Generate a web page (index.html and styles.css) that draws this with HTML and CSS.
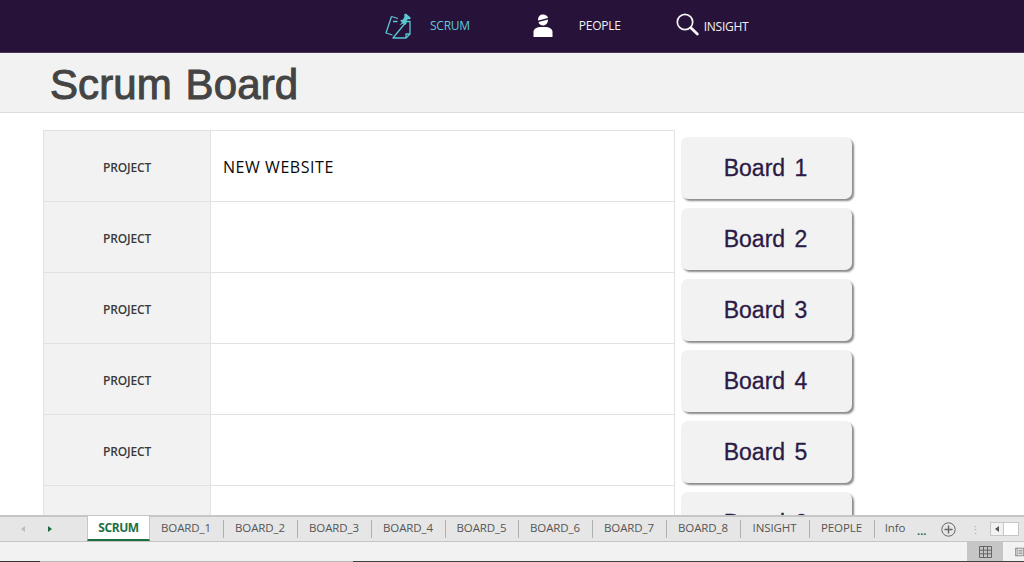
FILE: index.html
```html
<!DOCTYPE html>
<html lang="en">
<head>
<meta charset="utf-8">
<title>Scrum Board</title>
<link rel="stylesheet" href="styles.css">
</head>
<body>
<div class="page">
  <header class="topbar">
    <div class="nav nav-scrum">
      <svg class="ico-scrum" width="27" height="26" viewBox="0 0 27 26" fill="none" stroke="#5cc6d3" stroke-width="1.3" stroke-linejoin="round">
        <path d="M6.500 3.500 L13 5.500 M6.500 3.500 L1 20 L7.500 22"/>
        <path d="M8 8.500 L12.500 8.500 M21.500 8.500 L25 8.500 V21 L21 25 H8 Z"/>
        <path d="M21 25 V21 L25 21"/>
        <path d="M14 12.500 L17 9.500 L15 7.500 L18 6.500 L19.500 3.500 L19 1.500 L21 0.500 L26 5 L24.500 6.500 L23 6 L21 8.500 L21.500 10.500 L20 12 L18 10.500 Z" fill="#5cc6d3" stroke="none"/>
      </svg>
      <span class="nav-label label-scrum">SCRUM</span>
    </div>
    <div class="nav nav-people">
      <svg class="ico-people" width="20" height="23" viewBox="0 0 20 23" fill="#fff">
        <path d="M5 6 C5 2.500 7 0.500 10 0.500 C13 0.500 15 2.500 15 4 L5.500 6.500 Z"/>
        <path d="M5.500 8 L15 5.500 C15 9 13 11.500 10 11.500 C7.500 11.500 6 10 5.500 8 Z"/>
        <path d="M0.500 23 V18 C0.500 15 3.500 13.500 6.500 13 H13.500 C16.500 13.500 19.500 15 19.500 18 V23 Z"/>
      </svg>
      <span class="nav-label label-people">PEOPLE</span>
    </div>
    <div class="nav nav-insight">
      <svg class="ico-insight" width="23" height="23" viewBox="0 0 23 23" fill="none" stroke="#f4f4f4">
        <circle cx="9" cy="9" r="7.700" stroke-width="1.700"/>
        <path d="M14.800 14.800 L21.300 21" stroke-width="2.800" stroke-linecap="round"/>
      </svg>
      <span class="nav-label">INSIGHT</span>
    </div>
  </header>

  <div class="titlebar"><h1 class="title">Scrum Board</h1></div>

  <main class="content">
    <div class="grid">
      <div class="row"><div class="cell-label">PROJECT</div><div class="cell-value">NEW WEBSITE</div></div>
      <div class="row"><div class="cell-label">PROJECT</div><div class="cell-value"></div></div>
      <div class="row"><div class="cell-label">PROJECT</div><div class="cell-value"></div></div>
      <div class="row"><div class="cell-label">PROJECT</div><div class="cell-value"></div></div>
      <div class="row"><div class="cell-label">PROJECT</div><div class="cell-value"></div></div>
      <div class="row"><div class="cell-label"></div><div class="cell-value"></div></div>
    </div>
    <div class="buttons">
      <div class="board-btn">Board 1</div>
      <div class="board-btn">Board 2</div>
      <div class="board-btn">Board 3</div>
      <div class="board-btn">Board 4</div>
      <div class="board-btn">Board 5</div>
      <div class="board-btn">Board 6</div>
    </div>
  </main>

  <div class="tabbar">
    <div class="tab-nav">
      <span class="arrow-left"></span>
      <span class="arrow-right"></span>
    </div>
    <div class="tab tab-active">SCRUM</div>
    <div class="tab">BOARD_1</div>
    <div class="tab">BOARD_2</div>
    <div class="tab">BOARD_3</div>
    <div class="tab">BOARD_4</div>
    <div class="tab tab-narrow">BOARD_5</div>
    <div class="tab">BOARD_6</div>
    <div class="tab">BOARD_7</div>
    <div class="tab">BOARD_8</div>
    <div class="tab tab-insight">INSIGHT</div>
    <div class="tab tab-people">PEOPLE</div>
    <div class="tab tab-info">Info</div>
    <div class="tab-more">...</div>
    <svg class="tab-add" width="15" height="15" viewBox="0 0 15 15" fill="none" stroke="#666">
      <circle cx="7.500" cy="7.500" r="6.700"/>
      <path d="M7.500 3.500 V11.500 M3.500 7.500 H11.500" stroke-width="1.400"/>
    </svg>
    <div class="tab-dots">⋮</div>
    <div class="scroller">
      <div class="scroll-left"><span class="scroll-arrow"></span></div>
      <div class="scroll-thumb"></div>
    </div>
  </div>

  <div class="statusbar">
    <div class="view view-active">
      <svg width="13" height="12" viewBox="0 0 13 12" fill="none" stroke="#666">
        <path d="M.5 .5 H12.500 V11.500 H.5 Z M4.500 .5 V11.500 M8.500 .5 V11.500 M.5 4.200 H12.500 M.5 7.800 H12.500"/>
      </svg>
    </div>
    <div class="view">
      <svg width="13" height="12" viewBox="0 0 13 12" fill="none" stroke="#666">
        <path d="M.5 .5 H12.500 V11.500 H.5 Z M3 .5 V11.500 M5 3.500 H11 M5 6 H11 M5 8.500 H11"/>
      </svg>
    </div>
  </div>

  <div class="edge">
    <span class="edge-a"></span><span class="edge-b"></span><span class="edge-c"></span>
  </div>
</div>
</body>
</html>
```
FILE: styles.css
```css
* { box-sizing: border-box; }
html, body { margin: 0; padding: 0; height: 100%; overflow: hidden; background: #fff; }
.page { width: 1024px; height: 562px; display: flex; flex-direction: column; overflow: hidden; font-family: "Open Sans", "Noto Sans", sans-serif; }

.topbar { flex: 0 0 53px; background: #27123a; border-bottom: 1px solid #4a3a5a; display: flex; align-items: flex-start; }
.nav { display: flex; align-items: center; color: #f2f2f2; }
.nav-label { font-size: 12px; line-height: 14px; letter-spacing: -0.25px; }
.nav-scrum { margin: 13px 0 0 385px; }
.ico-scrum { margin-right: 18px; }
.label-scrum { color: #62c8d6; margin-top: -1px; }
.nav-people { margin: 14px 0 0 63px; }
.ico-people { margin-right: 26px; }
.label-people { margin-top: 1px; }
.nav-insight { margin: 15px 0 0 55px; }
.ico-insight { margin-right: 6px; margin-top: -2px; }
.nav-insight .nav-label { margin-top: 2px; margin-left: -1px; }

.titlebar { flex: 0 0 60px; min-height: 0; overflow: hidden; background: #f2f2f2; border-bottom: 1px solid #dcdcdc; padding-left: 50px; }
.title { margin: 0; height: 59px; font-family: "Liberation Sans", Arial, sans-serif; font-weight: 400; font-size: 42px; line-height: 63px; color: #444; -webkit-text-stroke: 1px #444; letter-spacing: 0.1px; word-spacing: 2px; }

.content { flex: 1 1 0; min-height: 0; overflow: hidden; display: flex; align-items: flex-start; padding: 17px 0 0 43px; background: #fff; }
.grid { width: 632px; flex: none; border: 1px solid #e2e2e2; border-bottom: 0; }
.row { height: 71px; display: flex; border-bottom: 1px solid #e2e2e2; }
.cell-label { width: 167px; background: #f2f2f2; border-right: 1px solid #e2e2e2; display: flex; align-items: center; justify-content: center; font-size: 12px; font-weight: 600; color: #3a3a3a; letter-spacing: -0.15px; padding-top: 2px; }
.cell-value { flex: 1; display: flex; align-items: center; padding: 1px 0 0 12px; font-size: 16px; letter-spacing: 0.55px; color: #0a0a0a; }

.buttons { margin: 7px 0 0 6px; display: flex; flex-direction: column; gap: 9px; flex: none; }
.board-btn { width: 171px; height: 62px; background: #f2f2f2; border-radius: 7px; box-shadow: 2px 2px 2px #8a8a8a; display: flex; align-items: center; justify-content: center; font-family: "Liberation Sans", Arial, sans-serif; font-size: 23px; color: #2d1a45; -webkit-text-stroke: 0.3px #2d1a45; word-spacing: 3px; padding-right: 2px; }

.tabbar { flex: 0 0 27px; background: #e6e6e6; border-top: 2px solid #c6c6c6; border-bottom: 1px solid #c6c6c6; display: flex; align-items: center; font-size: 11.5px; color: #555; }
.tab-nav { width: 87px; display: flex; align-items: center; padding-left: 21px; gap: 23px; }
.arrow-left, .arrow-right { width: 0; height: 0; border-top: 3px solid transparent; border-bottom: 3px solid transparent; }
.arrow-left { border-right: 4px solid #bcbcbc; }
.arrow-right { border-left: 4px solid #1d6b41; }
.tab { height: 18px; line-height: 16px; width: 74px; padding-right: 1px; text-align: center; border-right: 1px solid #b0b0b0; flex: none; letter-spacing: -0.1px; }
.tab-narrow { width: 73px; }
.tab-active { width: 63px; height: 25px; line-height: 23px; margin-top: -1px; padding-right: 0; background: #fff; border: 0; border-left: 1px solid #c6c6c6; border-right: 1px solid #c6c6c6; border-bottom: 2px solid #1d7044; color: #1d7044; font-weight: 700; font-size: 12px; letter-spacing: -0.4px; }
.tab-insight { width: 69px; }
.tab-people { width: 65px; }
.tab-info { width: 41px; border-right: 0; }
.tab-more { width: 14px; margin-left: 1px; color: #1d6b41; font-weight: 700; font-size: 11px; line-height: 12px; margin-top: 3px; }
.tab-add { margin-left: 10px; }
.tab-dots { width: 12px; margin-left: 13px; color: #aaa; font-size: 11px; text-align: center; }
.scroller { margin-left: 9px; display: flex; height: 14px; width: 29px; background: #fff; border: 1px solid #c6c6c6; }
.scroll-left { width: 13px; background: #f2f2f2; border-right: 1px solid #c6c6c6; display: flex; align-items: center; justify-content: center; }
.scroll-arrow { width: 0; height: 0; border-top: 3px solid transparent; border-bottom: 3px solid transparent; border-right: 4px solid #555; }
.scroll-thumb { flex: 1; background: #fff; }

.statusbar { flex: 0 0 19px; background: #f2f2f2; display: flex; justify-content: flex-end; }
.view { width: 36px; display: flex; align-items: center; justify-content: center; flex: none; }
.view-active { background: #c6c6c6; }
.view + .view { width: 21px; justify-content: flex-start; padding-left: 12px; }

.edge { flex: 0 0 1px; display: flex; }
.edge-a { width: 40px; background: #333; }
.edge-b { width: 313px; background: #b8b8b8; }
.edge-c { flex: 1; background: #3c4440; }
```
